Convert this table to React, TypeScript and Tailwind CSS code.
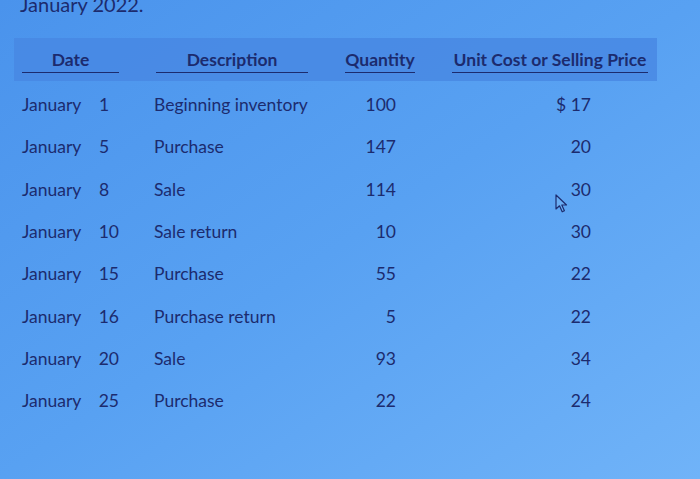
const rows = [
  { m: "January", d: "1", desc: "Beginning inventory", q: "100", p: "$ 17" },
  { m: "January", d: "5", desc: "Purchase", q: "147", p: "20" },
  { m: "January", d: "8", desc: "Sale", q: "114", p: "30" },
  { m: "January", d: "10", desc: "Sale return", q: "10", p: "30" },
  { m: "January", d: "15", desc: "Purchase", q: "55", p: "22" },
  { m: "January", d: "16", desc: "Purchase return", q: "5", p: "22" },
  { m: "January", d: "20", desc: "Sale", q: "93", p: "34" },
  { m: "January", d: "25", desc: "Purchase", q: "22", p: "24" },
];

const cols = "grid grid-cols-[97px_152px_70px_196px] gap-x-[37px]";

function Cursor() {
  return (
    <svg
      className="absolute left-[103px] top-[17px] h-[19px] w-[13px]"
      viewBox="0 0 13 19"
      fill="none"
    >
      <path
        d="M1 1 L1 15 L4.5 11.8 L7.2 17.8 L9.4 16.8 L6.8 11 L11.5 11 Z"
        fill="#6aaef4"
        stroke="#1c2b6e"
        strokeWidth="1.2"
        strokeLinejoin="round"
      />
    </svg>
  );
}

export default function App() {
  return (
    <div
      className="h-[479px] w-[700px] overflow-hidden bg-gradient-to-br from-[#4a93ec] via-[#58a1f2] to-[#70b3f8] text-[#1c2b6e]"
      style={{ fontFamily: "Lato, 'Liberation Sans', sans-serif" }}
    >
      <div className="-mt-[8px] pl-[20px] text-[20px] leading-[24px]">January 2022.</div>

      <div className="pl-[14px] pt-[22px]">
        {/* header band */}
        <div className={`${cols} h-[43px] w-[643px] items-center bg-[#4787e2]/80 pl-[8px] text-[17.5px] font-bold`}>
          <div className="border-b-[1.5px] border-[#1c2b6e] pt-[3px] pb-[2px] text-center leading-[20px]">Date</div>
          <div className="border-b-[1.5px] border-[#1c2b6e] pt-[3px] pb-[2px] text-center leading-[20px]">Description</div>
          <div className="border-b-[1.5px] border-[#1c2b6e] pt-[3px] pb-[2px] text-center leading-[20px]">Quantity</div>
          <div className="border-b-[1.5px] border-[#1c2b6e] pt-[3px] pb-[2px] text-center leading-[20px] whitespace-nowrap">
            Unit Cost or Selling Price
          </div>
        </div>

        {/* rows */}
        <div className="pt-[3px]">
          {rows.map((r, i) => (
            <div key={i} className={`${cols} h-[42.3px] items-center pl-[8px] text-[17.5px]`}>
              <div className="flex">
                <span className="w-[77px]">{r.m}</span>
                <span>{r.d}</span>
              </div>
              <div className="-ml-[2px] whitespace-nowrap">{r.desc}</div>
              <div className="pr-[19px] text-right">{r.q}</div>
              <div className="relative pr-[57px] text-right">
                {r.p}
                {i === 2 && <Cursor />}
              </div>
            </div>
          ))}
        </div>
      </div>
    </div>
  );
}
